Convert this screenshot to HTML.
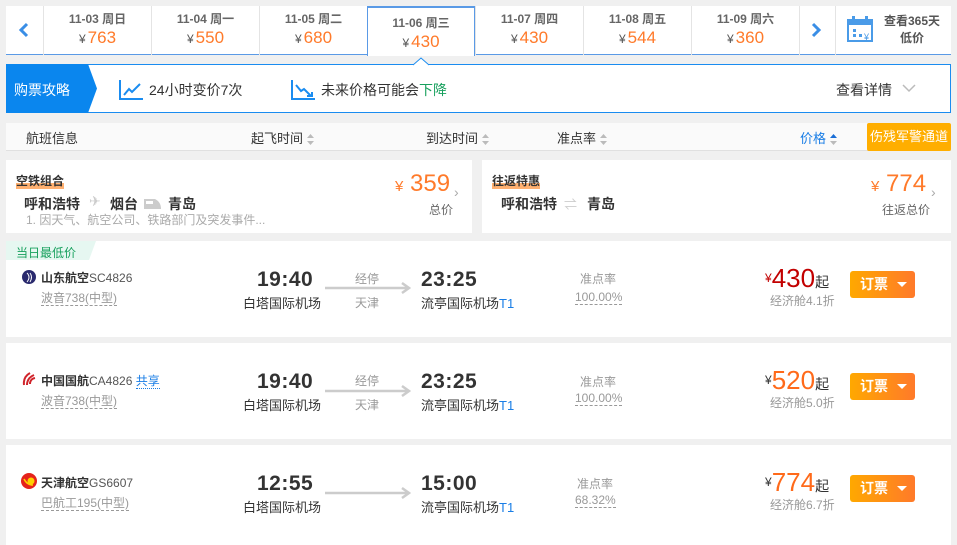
<!DOCTYPE html>
<html><head><meta charset="utf-8"><style>
*{margin:0;padding:0;box-sizing:border-box}
body{width:957px;height:541px;background:#f0f0f0;font-family:"Liberation Sans","Noto Sans CJK SC",sans-serif;font-size:12px;color:#333;position:relative;overflow:hidden}
.a{position:absolute}
.date{position:absolute;top:6px;height:49px;width:108px;border-left:1px solid #e4e4e4;text-align:center}
.date .d{font-size:12px;color:#666;font-weight:bold;margin-top:6px;line-height:14px}
.date .p{font-size:17px;color:#ff7a2a;line-height:20px;margin-top:2px}
.date .p i{font-style:normal;font-size:12px;color:#555;margin-right:2px}
.hd{font-size:13px;color:#333}
.sort{display:inline-block;width:7px;vertical-align:middle;margin-left:4px}
.card{background:#fff;position:absolute}
.row{background:#fff;position:absolute;left:6px;width:945px;height:96px}
.tm{position:absolute;font-size:21px;font-weight:bold;color:#333;line-height:22px;letter-spacing:0.5px}
.ap{position:absolute;font-size:13px;color:#333}
.gray{color:#999}
.btn{position:absolute;left:850px;width:65px;height:27px;border-radius:3px;background:linear-gradient(90deg,#ffa800,#ff7a2a);color:#fff;font-size:14px;font-weight:bold;line-height:27px;padding-left:10px}
.btn:after{content:"";position:absolute;left:47px;top:11px;border:5px solid transparent;border-top:5px solid #fff}
.dash{border-bottom:1px dashed #999}
</style></head><body>
<!-- date bar -->
<div class="a" style="left:6px;top:6px;width:945px;height:49px;background:#fff;border-bottom:1px solid #5a9ae6"></div>
<svg class="a" style="left:18px;top:22px" width="12" height="16"><path d="M9 2 L3 8 L9 14" stroke="#3a8ee6" stroke-width="3" fill="none"/></svg>
<div class="date" style="left:43px"><div class="d">11-03 周日</div><div class="p"><i>¥</i>763</div></div>
<div class="date" style="left:151px"><div class="d">11-04 周一</div><div class="p"><i>¥</i>550</div></div>
<div class="date" style="left:259px"><div class="d">11-05 周二</div><div class="p"><i>¥</i>680</div></div>
<div class="date" style="left:367px;border:1px solid #5a9ae6;border-top:2px solid #5a9ae6;border-bottom:none;height:50px;background:#fff"><div class="d" style="margin-top:8px">11-06 周三</div><div class="p"><i>¥</i>430</div></div>
<div class="date" style="left:475px"><div class="d">11-07 周四</div><div class="p"><i>¥</i>430</div></div>
<div class="date" style="left:583px"><div class="d">11-08 周五</div><div class="p"><i>¥</i>544</div></div>
<div class="date" style="left:691px"><div class="d">11-09 周六</div><div class="p"><i>¥</i>360</div></div>
<div class="date" style="left:799px;width:36px"></div>
<svg class="a" style="left:810px;top:22px" width="12" height="16"><path d="M3 2 L9 8 L3 14" stroke="#3a8ee6" stroke-width="3" fill="none"/></svg>
<div class="date" style="left:835px;width:116px"></div>
<svg class="a" style="left:846px;top:14px" width="28" height="30"><rect x="1" y="5" width="26" height="23" fill="#4a9be8"/><rect x="3" y="11" width="22" height="15" fill="#fff"/><rect x="6" y="2" width="3" height="6" fill="#4a9be8"/><rect x="19" y="2" width="3" height="6" fill="#4a9be8"/><rect x="7" y="15" width="3" height="3" fill="#4a9be8"/><rect x="7" y="20" width="3" height="3" fill="#4a9be8"/><rect x="13" y="20" width="3" height="3" fill="#4a9be8"/><text x="18" y="26" font-size="9" fill="#4a9be8" font-family="Liberation Sans">¥</text></svg>
<div class="a" style="left:884px;top:13px;font-size:12px;font-weight:bold;color:#555;line-height:17px;text-align:center">查看365天<br>低价</div>

<!-- strategy -->
<div class="a" style="left:6px;top:64px;width:945px;height:49px;background:#fff;border:1px solid #1a8cf0"></div>
<svg class="a" style="left:413px;top:57px" width="16" height="9"><path d="M0 8 L8 1 L16 8" fill="#fff" stroke="#1a8cf0"/></svg>
<svg class="a" style="left:6px;top:64px" width="92" height="49"><path d="M0 0 H82 L91 24.5 L82 49 H0Z" fill="#0a86ee"/></svg>
<div class="a" style="left:14px;top:80px;color:#fff;font-size:14px">购票攻略</div>
<svg class="a" style="left:119px;top:80px" width="24" height="20"><path d="M1 0 V19 H24" stroke="#1a8cf0" stroke-width="2" fill="none"/><path d="M5 15 L10 9 L13 12 L21 4" stroke="#1a8cf0" stroke-width="2" fill="none"/></svg>
<div class="a" style="left:149px;top:80px;font-size:14px">24小时变价7次</div>
<svg class="a" style="left:291px;top:80px" width="24" height="20"><path d="M1 0 V19 H24" stroke="#1a8cf0" stroke-width="2" fill="none"/><path d="M5 5 L10 11 L13 9 L20 16 M16 16 H21 V12" stroke="#1a8cf0" stroke-width="2" fill="none"/></svg>
<div class="a" style="left:321px;top:80px;font-size:14px">未来价格可能会<span style="color:#17a05d">下降</span></div>
<div class="a" style="left:836px;top:80px;font-size:14px">查看详情</div>
<svg class="a" style="left:902px;top:84px" width="14" height="9"><path d="M1 1 L7 7 L13 1" stroke="#bbb" stroke-width="1.5" fill="none"/></svg>

<!-- header -->
<div class="a" style="left:6px;top:123px;width:945px;height:28px;background:#fafafa;border-bottom:1px solid #e0e0e0"></div>
<div class="a hd" style="left:26px;top:128px">航班信息</div>
<div class="a hd" style="left:251px;top:128px">起飞时间<svg class="sort" width="7" height="11"><path d="M0 4 L3.5 0 L7 4Z M0 7 L3.5 11 L7 7Z" fill="#bbb"/></svg></div>
<div class="a hd" style="left:426px;top:128px">到达时间<svg class="sort" width="7" height="11"><path d="M0 4 L3.5 0 L7 4Z M0 7 L3.5 11 L7 7Z" fill="#bbb"/></svg></div>
<div class="a hd" style="left:557px;top:128px">准点率<svg class="sort" width="7" height="11"><path d="M0 4 L3.5 0 L7 4Z M0 7 L3.5 11 L7 7Z" fill="#bbb"/></svg></div>
<div class="a hd" style="left:800px;top:128px;color:#1a7ee6">价格<svg class="sort" width="7" height="11"><path d="M0 4 L3.5 0 L7 4Z" fill="#1a6ed6"/><path d="M0 7 L3.5 11 L7 7Z" fill="#bbb"/></svg></div>
<div class="a" style="left:867px;top:123px;width:84px;height:28px;background:#ffae00;border-radius:2px;color:#fff;font-size:13px;line-height:28px;text-align:center">伤残军警通道</div>

<!-- combo cards -->
<div class="card" style="left:6px;top:160px;width:466px;height:73px"></div>
<div class="a" style="left:16px;top:172px;font-size:12px;font-weight:bold;background:linear-gradient(transparent 65%,#ffb070 65%)">空铁组合</div>
<div class="a" style="left:24px;top:194px;font-size:14px;font-weight:bold">呼和浩特</div>
<div class="a" style="left:89px;top:193px;color:#ccc;font-size:14px">✈</div>
<div class="a" style="left:110px;top:194px;font-size:14px;font-weight:bold">烟台</div>
<svg class="a" style="left:144px;top:198px" width="18" height="12"><path d="M0 1 H11 Q17 4 17 11 H0Z" fill="#ccc"/><rect x="2" y="3" width="7" height="3" fill="#fff"/></svg>
<div class="a" style="left:168px;top:194px;font-size:14px;font-weight:bold">青岛</div>
<div class="a" style="left:26px;top:211px;color:#aaa;font-size:12px">1. 因天气、航空公司、铁路部门及突发事件...</div>
<div class="a" style="left:395px;top:170px;color:#ff7a2a;font-size:24px;line-height:28px"><span style="font-size:15px">¥</span> 359</div>
<div class="a" style="left:429px;top:201px;color:#666;font-size:12px">总价</div>
<div class="a" style="left:454px;top:184px;color:#aaa;font-size:14px">›</div>

<div class="card" style="left:482px;top:160px;width:469px;height:73px"></div>
<div class="a" style="left:492px;top:172px;font-size:12px;font-weight:bold;background:linear-gradient(transparent 65%,#ffb070 65%)">往返特惠</div>
<div class="a" style="left:501px;top:194px;font-size:14px;font-weight:bold">呼和浩特</div>
<div class="a" style="left:564px;top:194px;color:#ccc;font-size:13px">⇌</div>
<div class="a" style="left:587px;top:194px;font-size:14px;font-weight:bold">青岛</div>
<div class="a" style="left:871px;top:170px;color:#ff7a2a;font-size:24px;line-height:28px"><span style="font-size:15px">¥</span> 774</div>
<div class="a" style="left:882px;top:201px;color:#666;font-size:12px">往返总价</div>
<div class="a" style="left:931px;top:184px;color:#aaa;font-size:14px">›</div>

<!-- row 1 -->
<div class="row" style="top:241px"></div>
<svg class="a" style="left:6px;top:241px" width="90" height="19"><path d="M0 0 H90 L83 19 H0Z" fill="#e6f7f1"/></svg>
<div class="a" style="left:16px;top:244px;color:#17a05d;font-size:12px">当日最低价</div>
<svg class="a" style="left:22px;top:270px" width="14" height="14"><circle cx="7" cy="7" r="7" fill="#2a2a6e"/><path d="M5 3 Q9 7 5 12 M8 3 Q11 7 8 12" stroke="#fff" fill="none"/></svg>
<div class="a" style="left:41px;top:269px;font-size:12px"><b>山东航空</b><span style="color:#555">SC4826</span></div>
<div class="a dash gray" style="left:41px;top:291px;font-size:12px;line-height:14px">波音738(中型)</div>
<div class="tm" style="left:257px;top:269px">19:40</div>
<div class="ap" style="left:243px;top:293px">白塔国际机场</div>
<div class="a gray" style="left:355px;top:270px;font-size:12px">经停</div>
<div class="a gray" style="left:355px;top:294px;font-size:12px">天津</div>
<svg class="a" style="left:325px;top:282px" width="86" height="12"><path d="M0 6 H84 M77 1 L84 6 L77 11" stroke="#ccc" stroke-width="2.5" fill="none"/></svg>
<div class="tm" style="left:421px;top:269px">23:25</div>
<div class="ap" style="left:421px;top:293px">流亭国际机场<span style="color:#1a7ee6">T1</span></div>
<div class="a gray" style="left:580px;top:270px;font-size:12px">准点率</div>
<div class="a dash gray" style="left:575px;top:290px;font-size:12px;line-height:14px">100.00%</div>
<div class="a" style="left:765px;top:264px;color:#c20000;font-size:26px;line-height:28px"><span style="font-size:12px;vertical-align:top">¥</span>430<span style="font-size:14px;color:#333">起</span></div>
<div class="a gray" style="left:770px;top:292px;font-size:12px">经济舱4.1折</div>
<div class="btn" style="top:271px">订票</div>

<!-- row 2 -->
<div class="row" style="top:343px"></div>
<svg class="a" style="left:22px;top:371px" width="14" height="16"><path d="M2 14 Q1 6 8 2 M5 14 Q5 7 12 4 M8 13 Q8 8 13 7" stroke="#d0242b" stroke-width="2" fill="none"/></svg>
<div class="a" style="left:41px;top:372px;font-size:12px"><b>中国国航</b><span style="color:#555">CA4826</span> <span style="color:#1a7ee6;border-bottom:1px dotted #1a7ee6">共享</span></div>
<div class="a dash gray" style="left:41px;top:394px;font-size:12px;line-height:14px">波音738(中型)</div>
<div class="tm" style="left:257px;top:371px">19:40</div>
<div class="ap" style="left:243px;top:395px">白塔国际机场</div>
<div class="a gray" style="left:355px;top:372px;font-size:12px">经停</div>
<div class="a gray" style="left:355px;top:396px;font-size:12px">天津</div>
<svg class="a" style="left:325px;top:385px" width="86" height="12"><path d="M0 6 H84 M77 1 L84 6 L77 11" stroke="#ccc" stroke-width="2.5" fill="none"/></svg>
<div class="tm" style="left:421px;top:371px">23:25</div>
<div class="ap" style="left:421px;top:395px">流亭国际机场<span style="color:#1a7ee6">T1</span></div>
<div class="a gray" style="left:580px;top:373px;font-size:12px">准点率</div>
<div class="a dash gray" style="left:575px;top:391px;font-size:12px;line-height:14px">100.00%</div>
<div class="a" style="left:765px;top:366px;color:#ff6a1a;font-size:26px;line-height:28px"><span style="font-size:12px;vertical-align:top;color:#333">¥</span>520<span style="font-size:14px;color:#333">起</span></div>
<div class="a gray" style="left:770px;top:394px;font-size:12px">经济舱5.0折</div>
<div class="btn" style="top:373px">订票</div>

<!-- row 3 -->
<div class="row" style="top:445px;height:100px"></div>
<svg class="a" style="left:21px;top:473px" width="16" height="16"><circle cx="8" cy="8" r="8" fill="#e5231b"/><circle cx="10" cy="8" r="3.5" fill="#ffd000"/><path d="M3 6 Q6 12 12 12" stroke="#ffd000" stroke-width="1.5" fill="none"/></svg>
<div class="a" style="left:41px;top:474px;font-size:12px"><b>天津航空</b><span style="color:#555">GS6607</span></div>
<div class="a dash gray" style="left:41px;top:496px;font-size:12px;line-height:14px">巴航工195(中型)</div>
<div class="tm" style="left:257px;top:473px">12:55</div>
<div class="ap" style="left:243px;top:497px">白塔国际机场</div>
<svg class="a" style="left:325px;top:487px" width="86" height="12"><path d="M0 6 H84 M77 1 L84 6 L77 11" stroke="#ccc" stroke-width="2.5" fill="none"/></svg>
<div class="tm" style="left:421px;top:473px">15:00</div>
<div class="ap" style="left:421px;top:497px">流亭国际机场<span style="color:#1a7ee6">T1</span></div>
<div class="a gray" style="left:577px;top:475px;font-size:12px">准点率</div>
<div class="a dash gray" style="left:575px;top:493px;font-size:12px;line-height:14px">68.32%</div>
<div class="a" style="left:765px;top:468px;color:#ff6a1a;font-size:26px;line-height:28px"><span style="font-size:12px;vertical-align:top;color:#333">¥</span>774<span style="font-size:14px;color:#333">起</span></div>
<div class="a gray" style="left:770px;top:496px;font-size:12px">经济舱6.7折</div>
<div class="btn" style="top:475px">订票</div>
</body></html>
